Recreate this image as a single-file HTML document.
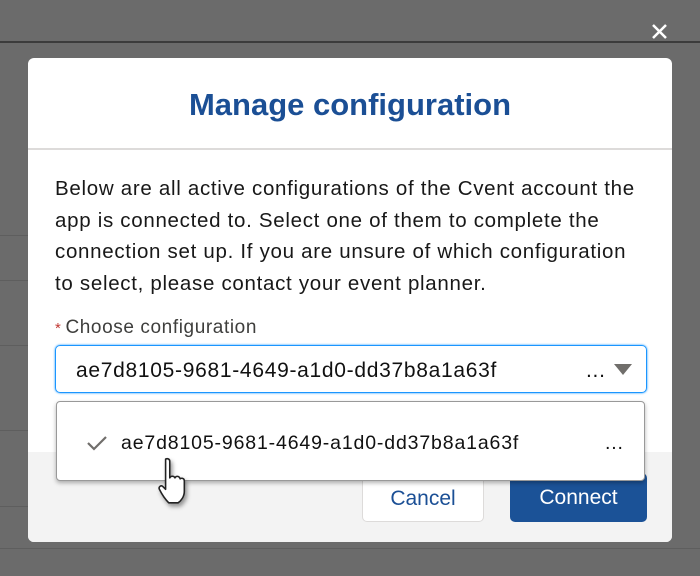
<!DOCTYPE html>
<html><head><style>
*{margin:0;padding:0;box-sizing:border-box}
body{width:700px;height:576px;background:#6b6b6b;position:relative;overflow:hidden;font-family:"Liberation Sans",sans-serif}
.bl{position:absolute;left:0;width:28px;height:1px;background:#5e5e5e}
.modal{position:absolute;left:28px;top:58px;width:644px;height:484px;background:#fff;border-radius:6px;overflow:hidden}
.hdr{height:92px;border-bottom:2px solid #dddbda;text-align:center;color:#1b4f95;font-size:31px;font-weight:bold;line-height:94px;letter-spacing:0}
.body{padding:23px 0 0 27px;font-size:20.5px;letter-spacing:0.7px;line-height:31.5px;color:#181818;white-space:nowrap}
.foot{position:absolute;left:0;top:394px;width:644px;height:90px;background:#f3f3f3}
.lbl{position:absolute;left:27px;top:259px;font-size:19px;letter-spacing:0.6px;color:#3e3e3c}
.lbl b{color:#c23934;font-weight:normal;margin-right:4px;font-size:15px}
.inp{position:absolute;left:27px;top:287px;width:592px;height:48px;border:1px solid #1b96ff;box-shadow:0 0 2px #1b96ff;border-radius:5px;font-size:21px;letter-spacing:0.7px;line-height:50px;padding-left:20px;color:#111}
.dd{position:absolute;left:28px;top:343px;width:589px;height:80px;background:#fff;border:1px solid #999;border-radius:4px;box-shadow:0 2px 4px rgba(0,0,0,.3);font-size:19.5px;letter-spacing:0.85px;color:#111}
.btn{position:absolute;top:415px;height:49px;border-radius:5px;font-size:21px;text-align:center;line-height:49px}
</style></head><body>
<div style="position:absolute;left:0;top:41px;width:700px;height:2px;background:#3c3c3c"></div>
<div class="bl" style="top:235px"></div><div class="bl" style="top:280px"></div><div class="bl" style="top:345px"></div><div class="bl" style="top:430px"></div><div class="bl" style="top:506px"></div>
<div style="position:absolute;left:0;top:548px;width:700px;height:1px;background:#5e5e5e"></div>
<svg style="position:absolute;left:651px;top:23px" width="17" height="17"><path d="M2 2L15 15M15 2L2 15" stroke="#fff" stroke-width="2.5"/></svg>
<div class="modal">
<div class="hdr">Manage configuration</div>
<div class="body">Below are all active configurations of the Cvent account the<br>app is connected to. Select one of them to complete the<br>connection set up. If you are unsure of which configuration<br>to select, please contact your event planner.</div>
<div class="foot"></div>
<div class="lbl"><b>*</b>Choose configuration</div>
<div class="inp">ae7d8105-9681-4649-a1d0-dd37b8a1a63f
<span style="position:absolute;left:530px;top:0">...</span>
<svg style="position:absolute;left:558px;top:18px" width="18" height="12"><path d="M0 0H18L9 11Z" fill="#706e6b"/></svg></div>
<div class="btn" style="left:334px;width:122px;background:#fff;border:1px solid #dddbda;color:#1b4f95">Cancel</div>
<div class="btn" style="left:482px;width:137px;background:#1b5297;color:#fff">Connect</div>
<div class="dd">
<svg style="position:absolute;left:30px;top:33px" width="20" height="16"><path d="M1 8L7 14L19 2" stroke="#706e6b" stroke-width="2.2" fill="none"/></svg>
<span style="position:absolute;left:64px;top:30px">ae7d8105-9681-4649-a1d0-dd37b8a1a63f</span>
<span style="position:absolute;left:548px;top:30px">...</span>
</div>
<svg style="position:absolute;left:126px;top:398px;filter:drop-shadow(2px 3px 2px rgba(0,0,0,.4))" width="44" height="52" viewBox="0 0 40 50"><path d="M10 3c2-1 4 0 4 2v16c1-2 4-2 5 0 1-2 4-2 5 1 1-1 4-1 4 2v10c0 5-3 9-6 11H13c-3-3-7-9-9-13-1-2 1-4 3-3l3 3V5z" fill="#fff" stroke="#222" stroke-width="1.5" stroke-linejoin="round"/></svg>
</div>
</body></html>
